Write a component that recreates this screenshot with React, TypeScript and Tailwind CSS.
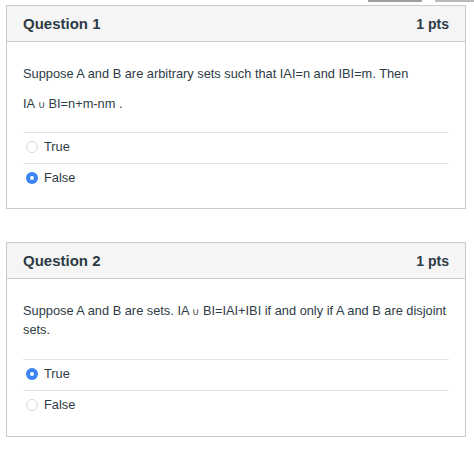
type Option = { label: string; checked: boolean };

function Radio({ checked }: { checked: boolean }) {
  if (checked) {
    return (
      <span className="flex h-[12px] w-[12px] items-center justify-center rounded-full bg-[#3a86f0]">
        <span className="h-[4px] w-[4px] rounded-full bg-white" />
      </span>
    );
  }
  return <span className="h-[12px] w-[12px] rounded-full border border-[#d3d6d8] bg-white" />;
}

function Cup() {
  return <span className="text-[10px]">{"\u222a"}</span>;
}

function QuestionCard({
  title,
  body,
  options,
  sepGap,
  padBottom,
}: {
  title: string;
  body: React.ReactNode;
  options: Option[];
  sepGap: string;
  padBottom: string;
}) {
  return (
    <div className="border border-[#c8cccf] bg-white">
      <div className="flex h-[36px] items-center justify-between border-b border-[#c8cccf] bg-[#f5f5f5] px-[16px] pt-[1px]">
        <span className="text-[15px] font-bold text-[#2d3b45]">{title}</span>
        <span className="text-[14px] font-bold text-[#2d3b45]">1 pts</span>
      </div>
      <div className={`px-[16px] pt-[23px] ${padBottom}`}>
        <div className="text-[12.8px] leading-[18px] text-[#2d3b45]">{body}</div>
        <div className={`${sepGap} border-t border-[#e2e4e6]`}>
          {options.map((o, i) => (
            <div
              key={o.label}
              className={`flex h-[30px] items-center gap-[6px] pb-[2px] pl-[3px] text-[12.8px] text-[#2d3b45] ${
                i > 0 ? "border-t border-[#e2e4e6]" : ""
              }`}
            >
              <Radio checked={o.checked} />
              <span>{o.label}</span>
            </div>
          ))}
        </div>
      </div>
    </div>
  );
}

export default function App() {
  return (
    <div
      className="relative h-[450px] w-[474px] overflow-hidden bg-white pl-[6px] pr-[8px] pt-[5px]"
      style={{ fontFamily: '"Liberation Sans", Arial, sans-serif' }}
    >
      <div className="absolute left-[368px] top-0 h-[2px] w-[54px] bg-[#9aa0a4]" />
      <div className="absolute left-[435px] top-0 h-[2px] w-[39px] bg-[#b5babd]" />
      <QuestionCard
        title="Question 1"
        body={
          <div className="flex flex-col gap-[12px]">
            <p>Suppose A and B are arbitrary sets such that IAI=n and IBI=m. Then</p>
            <p>
              IA <Cup /> BI=n+m-nm .
            </p>
          </div>
        }
        sepGap="mt-[18px]"
        padBottom="pb-[15px]"
        options={[
          { label: "True", checked: false },
          { label: "False", checked: true },
        ]}
      />
      <div className="h-[33px]" />
      <QuestionCard
        title="Question 2"
        body={
          <p>
            Suppose A and B are sets. IA <Cup /> BI=IAI+IBI if and only if A and B are disjoint sets.
          </p>
        }
        sepGap="mt-[20px]"
        padBottom="pb-[16px]"
        options={[
          { label: "True", checked: true },
          { label: "False", checked: false },
        ]}
      />
    </div>
  );
}
